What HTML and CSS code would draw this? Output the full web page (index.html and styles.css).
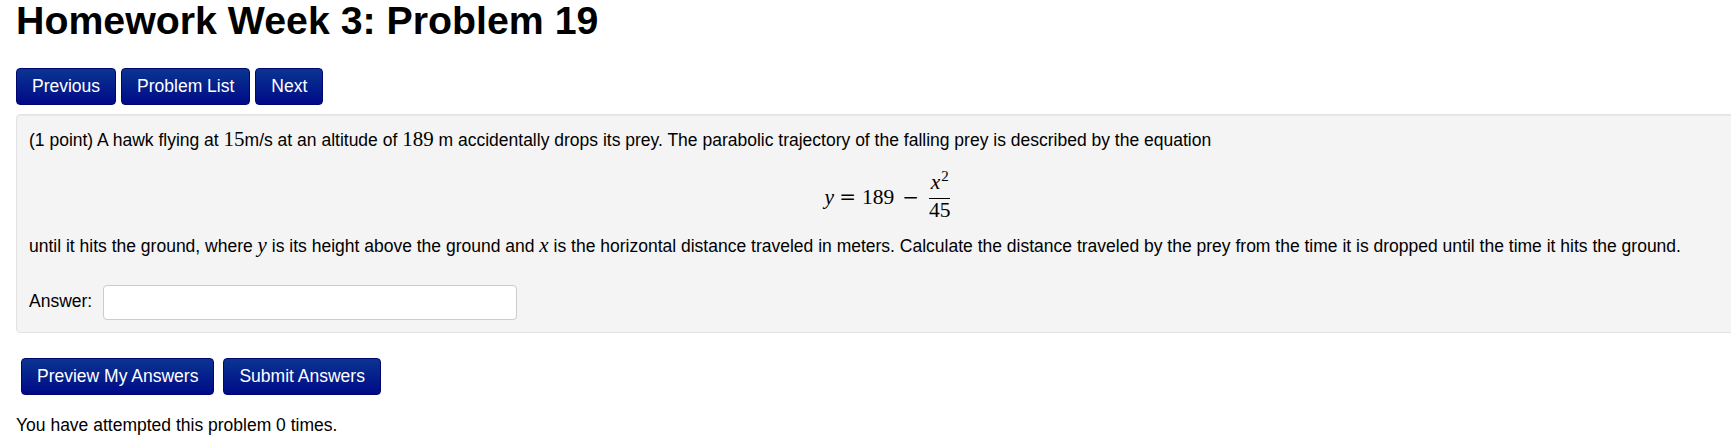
FILE: index.html
```html
<!DOCTYPE html>
<html lang="en">
<head>
<meta charset="utf-8">
<title>Homework Week 3: Problem 19</title>
<link rel="stylesheet" href="styles.css">
</head>
<body>
<h1 class="title">Homework Week 3: Problem 19</h1>
<div class="nav">
  <a class="btn">Previous</a>
  <a class="btn">Problem List</a>
  <a class="btn">Next</a>
</div>
<div class="problem">
  <p class="line">(1 point) A hawk flying at <span class="m">15</span>m/s at an altitude of <span class="m">189</span> m accidentally drops its prey. The parabolic trajectory of the falling prey is described by the equation</p>
  <div class="eq">
    <span class="eq-main"><span class="mi">y</span><span class="op op-eq">=</span><span class="num">189</span><span class="op op-minus">−</span></span>
    <span class="frac">
      <span class="frac-top"><span class="mi">x</span><span class="sup">2</span></span>
      <span class="frac-bar"></span>
      <span class="frac-bot">45</span>
    </span>
  </div>
  <p class="line">until it hits the ground, where <span class="m mi">y</span> is its height above the ground and <span class="m mi">x</span> is the horizontal distance traveled in meters. Calculate the distance traveled by the prey from the time it is dropped until the time it hits the ground.</p>
  <div class="answer">
    <label class="answer-label">Answer:</label>
    <input class="answer-input" type="text">
  </div>
</div>
<div class="submit">
  <a class="btn">Preview My Answers</a>
  <a class="btn btn-gap">Submit Answers</a>
</div>
<p class="attempts">You have attempted this problem 0 times.</p>
</body>
</html>
```
FILE: styles.css
```css
html, body {
  overflow: hidden;
}
body {
  margin: 0;
  padding: 0 0 0 16px;
  font-family: "Liberation Sans", Arial, sans-serif;
  font-size: 17.5px;
  line-height: 24px;
  color: #000;
  background: #fff;
}
.title {
  margin: 0;
  font-size: 39.3px;
  line-height: 40px;
  font-weight: bold;
  color: #000;
}
.nav {
  margin-top: 28px;
  display: flex;
  gap: 5px;
}
.btn {
  display: inline-block;
  padding: 7px 15px;
  line-height: 21px;
  font-size: 17.5px;
  color: #fff;
  background: linear-gradient(to bottom, #0a3592, #000a87);
  border: 1px solid #00066e;
  border-radius: 4px;
  text-decoration: none;
  white-space: nowrap;
}
.problem {
  margin-top: 9px;
  width: 1744px;
  box-sizing: border-box;
  padding: 12px;
  background: #f4f4f4;
  border: 1px solid #e3e3e3;
  border-radius: 4px;
  box-shadow: inset 0 1px 1px rgba(0,0,0,0.05);
}
.line {
  margin: 0;
}
.m {
  font-family: "Liberation Serif", "Times New Roman", serif;
  font-size: 21px;
}
.mi {
  font-style: italic;
}
.eq {
  margin: 20px 0 13px;
  height: 48px;
  display: flex;
  justify-content: center;
  align-items: center;
  font-family: "Liberation Serif", "Times New Roman", serif;
  font-size: 21.5px;
  line-height: 21px;
}
.eq-main {
  display: inline-flex;
  align-items: baseline;
  margin-top: 3px;
}
.op {
  font-family: "DejaVu Serif", serif;
  font-size: 20px;
}
.op-eq {
  margin: 0 6px 0 5px;
}
.op-minus {
  margin: 0 9px 0 8px;
}
.frac {
  display: inline-flex;
  flex-direction: column;
  align-items: center;
  padding: 0 1px;
}
.frac-top {
  padding-bottom: 3px;
  line-height: 21px;
}
.sup {
  font-size: 15px;
  position: relative;
  top: -8px;
  margin-left: 1px;
}
.frac-bar {
  align-self: stretch;
  height: 0;
  border-top: 1.3px solid #000;
}
.frac-bot {
  padding-top: 1px;
  line-height: 21px;
}
.answer {
  margin-top: 27px;
  display: flex;
  align-items: center;
  gap: 11px;
}
.answer-label {
  padding-bottom: 4px;
}
.answer-input {
  width: 414px;
  height: 35px;
  box-sizing: border-box;
  border: 1px solid #cccccc;
  border-radius: 4px;
  background: #fff;
  padding: 4px 6px;
  font-size: 17px;
  font-family: "Liberation Sans", Arial, sans-serif;
}
.submit {
  margin-top: 25px;
  margin-left: 5px;
  display: flex;
  gap: 9px;
}
.attempts {
  margin: 18px 0 0;
}
```
